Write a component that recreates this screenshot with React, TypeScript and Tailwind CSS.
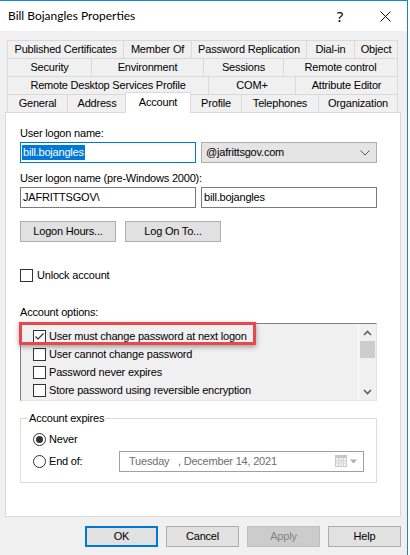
import React from "react";

const FONT = { fontFamily: '"Liberation Sans", Arial, sans-serif', letterSpacing: "-0.2px" };

type Tab = { label: string; w: number; selected?: boolean };

const rows: Tab[][] = [
  [
    { label: "Published Certificates", w: 116 },
    { label: "Member Of", w: 68 },
    { label: "Password Replication", w: 115 },
    { label: "Dial-in", w: 48 },
    { label: "Object", w: 43 },
  ],
  [
    { label: "Security", w: 84 },
    { label: "Environment", w: 112 },
    { label: "Sessions", w: 80 },
    { label: "Remote control", w: 114 },
  ],
  [
    { label: "Remote Desktop Services Profile", w: 201 },
    { label: "COM+", w: 87 },
    { label: "Attribute Editor", w: 102 },
  ],
];

const row4: Tab[] = [
  { label: "General", w: 60 },
  { label: "Address", w: 59 },
  { label: "Account", w: 64, selected: true },
  { label: "Profile", w: 51 },
  { label: "Telephones", w: 77 },
  { label: "Organization", w: 79 },
];

function Check({ checked }: { checked?: boolean }) {
  return (
    <div className="w-[13px] h-[13px] border border-[#333333] bg-white flex items-center justify-center shrink-0">
      {checked && (
        <svg width="11" height="11" viewBox="0 0 11 11">
          <path d="M1.5 5.5 L4 8 L9.5 2.5" fill="none" stroke="#333" strokeWidth="1.2" />
        </svg>
      )}
    </div>
  );
}

function Radio({ checked }: { checked?: boolean }) {
  return (
    <div className="w-[13px] h-[13px] rounded-full border border-[#333333] bg-white flex items-center justify-center shrink-0">
      {checked && <div className="w-[7px] h-[7px] rounded-full bg-[#333333]" />}
    </div>
  );
}

function Btn({ children, w, cls = "" }: { children: React.ReactNode; w: number; cls?: string }) {
  return (
    <div
      className={`h-[21px] flex items-center justify-center text-[11px] ${cls}`}
      style={{ width: w }}
    >
      {children}
    </div>
  );
}

export default function App() {
  return (
    <div className="w-[410px] h-[555px] bg-white" style={FONT}>
      <div className="w-[408px] h-[555px] bg-[#f0f0f0] border-t border-r border-[#1883d7] flex flex-col">
        {/* Title bar */}
        <div className="h-[30px] bg-white flex items-center shrink-0">
          <div
            className="pl-[8px] text-[12px] text-black flex-1"
            style={{ fontFamily: 'Lato, "Noto Sans", sans-serif', letterSpacing: "0px" }}
          >
            Bill Bojangles Properties
          </div>
          <div
            className="w-[20px] text-[15px] text-black mr-[30px] text-center"
            style={{ fontFamily: '"Noto Sans", sans-serif' }}
          >
            ?
          </div>
          <div className="mr-[16px] flex items-center">
            <svg width="11" height="11" viewBox="0 0 11 11">
              <path d="M0.5 0.5 L10.5 10.5 M10.5 0.5 L0.5 10.5" stroke="#111" strokeWidth="1" />
            </svg>
          </div>
        </div>

        {/* Body */}
        <div className="flex flex-col pt-[9px] pl-[5px]">
          {/* Tabs */}
          <div className="flex flex-col ml-[2px]">
            {rows.map((r, i) => (
              <div key={i} className="flex h-[18px]">
                {r.map((t, j) => (
                  <div
                    key={j}
                    className={`h-[18px] border-t border-l border-[#d9d9d9] flex items-center justify-center text-[11px] text-black whitespace-nowrap ${
                      j === r.length - 1 ? "border-r" : ""
                    }`}
                    style={{ width: t.w + (j === r.length - 1 ? 1 : 0) }}
                  >
                    {t.label}
                  </div>
                ))}
              </div>
            ))}
            <div className="flex h-[18px] items-end">
              {row4.map((t, j) => (
                <div
                  key={j}
                  className={
                    t.selected
                      ? "relative z-10 h-[21px] -mb-[1px] bg-white border-t border-l border-r border-[#d9d9d9] flex items-start pt-[1px] justify-center text-[11px] text-black whitespace-nowrap -ml-[1px] -mr-[1px]"
                      : `h-[18px] border-t border-l border-[#d9d9d9] flex items-center justify-center text-[11px] text-black whitespace-nowrap ${
                          j === row4.length - 1 ? "border-r" : ""
                        }`
                  }
                  style={{
                    width: t.selected ? t.w + 2 : t.w + (j === row4.length - 1 ? 1 : 0),
                  }}
                >
                  {t.label}
                </div>
              ))}
            </div>
          </div>

          {/* Panel */}
          <div className="w-[396px] h-[405px] bg-white border border-[#d9d9d9] flex flex-col pl-[14px] text-[11px] text-black">
            <div className="mt-[13px] h-[14px] leading-[14px]">User logon name:</div>
            <div className="mt-[2px] flex gap-[5px]">
              <div className="w-[176px] h-[21px] border border-[#0078d7] bg-white flex items-center pl-[1px]">
                <span className="bg-[#0078d7] text-white leading-[15px] px-[1px]">bill.bojangles</span>
              </div>
              <div className="w-[176px] h-[21px] border border-[#adadad] bg-[#e5e5e5] flex items-center pl-[4px] pr-[6px]">
                <span className="flex-1">@jafrittsgov.com</span>
                <svg width="10" height="6" viewBox="0 0 10 6">
                  <path d="M0.5 0.5 L5 5 L9.5 0.5" fill="none" stroke="#555" strokeWidth="1" />
                </svg>
              </div>
            </div>
            <div className="mt-[8px] h-[14px] leading-[14px]">User logon name (pre-Windows 2000):</div>
            <div className="mt-[2px] flex gap-[5px]">
              <div className="w-[176px] h-[21px] border border-[#7a7a7a] bg-white flex items-center pl-[2px]">
                JAFRITTSGOV\
              </div>
              <div className="w-[176px] h-[21px] border border-[#7a7a7a] bg-white flex items-center pl-[2px]">
                bill.bojangles
              </div>
            </div>
            <div className="mt-[13px] flex gap-[9px]">
              <Btn w={96} cls="bg-[#e1e1e1] border border-[#adadad]">Logon Hours...</Btn>
              <Btn w={96} cls="bg-[#e1e1e1] border border-[#adadad]">Log On To...</Btn>
            </div>
            <div className="mt-[26px] h-[14px] flex items-center gap-[4px]">
              <Check />
              <span>Unlock account</span>
            </div>
            <div className="mt-[23px] h-[14px] leading-[14px]">Account options:</div>

            {/* List box */}
            <div className="relative mt-[4px] w-[357px] h-[78px] bg-[#f0f0f0] border-t border-l border-[#828282] border-r border-b border-r-[#e3e3e3] border-b-[#e3e3e3] flex">
              <div className="flex-1 flex flex-col pt-[3px] pl-[12px]">
                {[
                  ["User must change password at next logon", true],
                  ["User cannot change password", false],
                  ["Password never expires", false],
                  ["Store password using reversible encryption", false],
                ].map(([label, c], i) => (
                  <div key={i} className="h-[18px] flex items-center gap-[3px]">
                    <Check checked={c as boolean} />
                    <span>{label as string}</span>
                  </div>
                ))}
              </div>
              <div className="w-[18px] h-full border-l border-white bg-[#f0f0f0] flex flex-col items-center">
                <div className="h-[17px] flex items-center justify-center">
                  <svg width="9" height="6" viewBox="0 0 9 6">
                    <path d="M1 5 L4.5 1.5 L8 5" fill="none" stroke="#606060" strokeWidth="1.6" />
                  </svg>
                </div>
                <div className="w-[15px] h-[17px] bg-[#cdcdcd]" />
                <div className="flex-1" />
                <div className="h-[17px] flex items-center justify-center">
                  <svg width="9" height="6" viewBox="0 0 9 6">
                    <path d="M1 1 L4.5 4.5 L8 1" fill="none" stroke="#606060" strokeWidth="1.6" />
                  </svg>
                </div>
              </div>
              {/* red highlight overlay */}
              <div className="absolute left-[-2px] top-[-2px] w-[237px] h-[23px] border-[3px] border-[#e8474c] shadow-[0_2px_5px_rgba(0,0,0,0.35)]" />
            </div>

            {/* Account expires */}
            <fieldset className="mt-[10px] w-[357px] h-[72px] border border-[#dcdcdc] pl-[12px]">
              <legend className="-ml-[5px] px-[1px] h-[14px] leading-[14px]">Account expires</legend>
              <div className="mt-[7px] h-[14px] flex items-center gap-[3px]">
                <Radio checked />
                <span>Never</span>
              </div>
              <div className="mt-[4px] h-[22px] flex items-center">
                <div className="flex items-center gap-[3px] w-[86px]">
                  <Radio />
                  <span>End of:</span>
                </div>
                <div className="w-[245px] h-[21px] border border-[#a0a0a0] bg-white flex items-center pl-[9px] pr-[5px] text-[#6d6d6d]">
                  <span className="flex-1 whitespace-pre">Tuesday   , December 14, 2021</span>
                  <svg width="12" height="12" viewBox="0 0 12 12">
                    <rect x="0.5" y="0.5" width="11" height="11" fill="#f4f4f4" stroke="#c8c8c8" />
                    <rect x="0.5" y="0.5" width="11" height="2.5" fill="#c8c8c8" />
                    <path d="M3.5 3 V11.5 M6 3 V11.5 M8.5 3 V11.5 M0.5 5.5 H11.5 M0.5 8 H11.5" stroke="#d4d4d4" strokeWidth="1" />
                  </svg>
                  <svg width="9" height="5" viewBox="0 0 9 5" className="ml-[2px]">
                    <path d="M1 0.5 L8 0.5 L4.5 4.5 Z" fill="#b0b0b0" />
                  </svg>
                </div>
              </div>
            </fieldset>
          </div>

          {/* Bottom buttons */}
          <div className="mt-[9px] flex gap-[8px] pl-[80px] text-[11px]">
            <Btn w={73} cls="bg-[#e1e1e1] border-2 border-[#0078d7] text-black">OK</Btn>
            <Btn w={73} cls="bg-[#e1e1e1] border border-[#adadad] text-black">Cancel</Btn>
            <Btn w={73} cls="bg-[#cccccc] border border-[#bfbfbf] text-[#838383]">Apply</Btn>
            <Btn w={73} cls="bg-[#e1e1e1] border border-[#adadad] text-black">Help</Btn>
          </div>
        </div>
      </div>
    </div>
  );
}
